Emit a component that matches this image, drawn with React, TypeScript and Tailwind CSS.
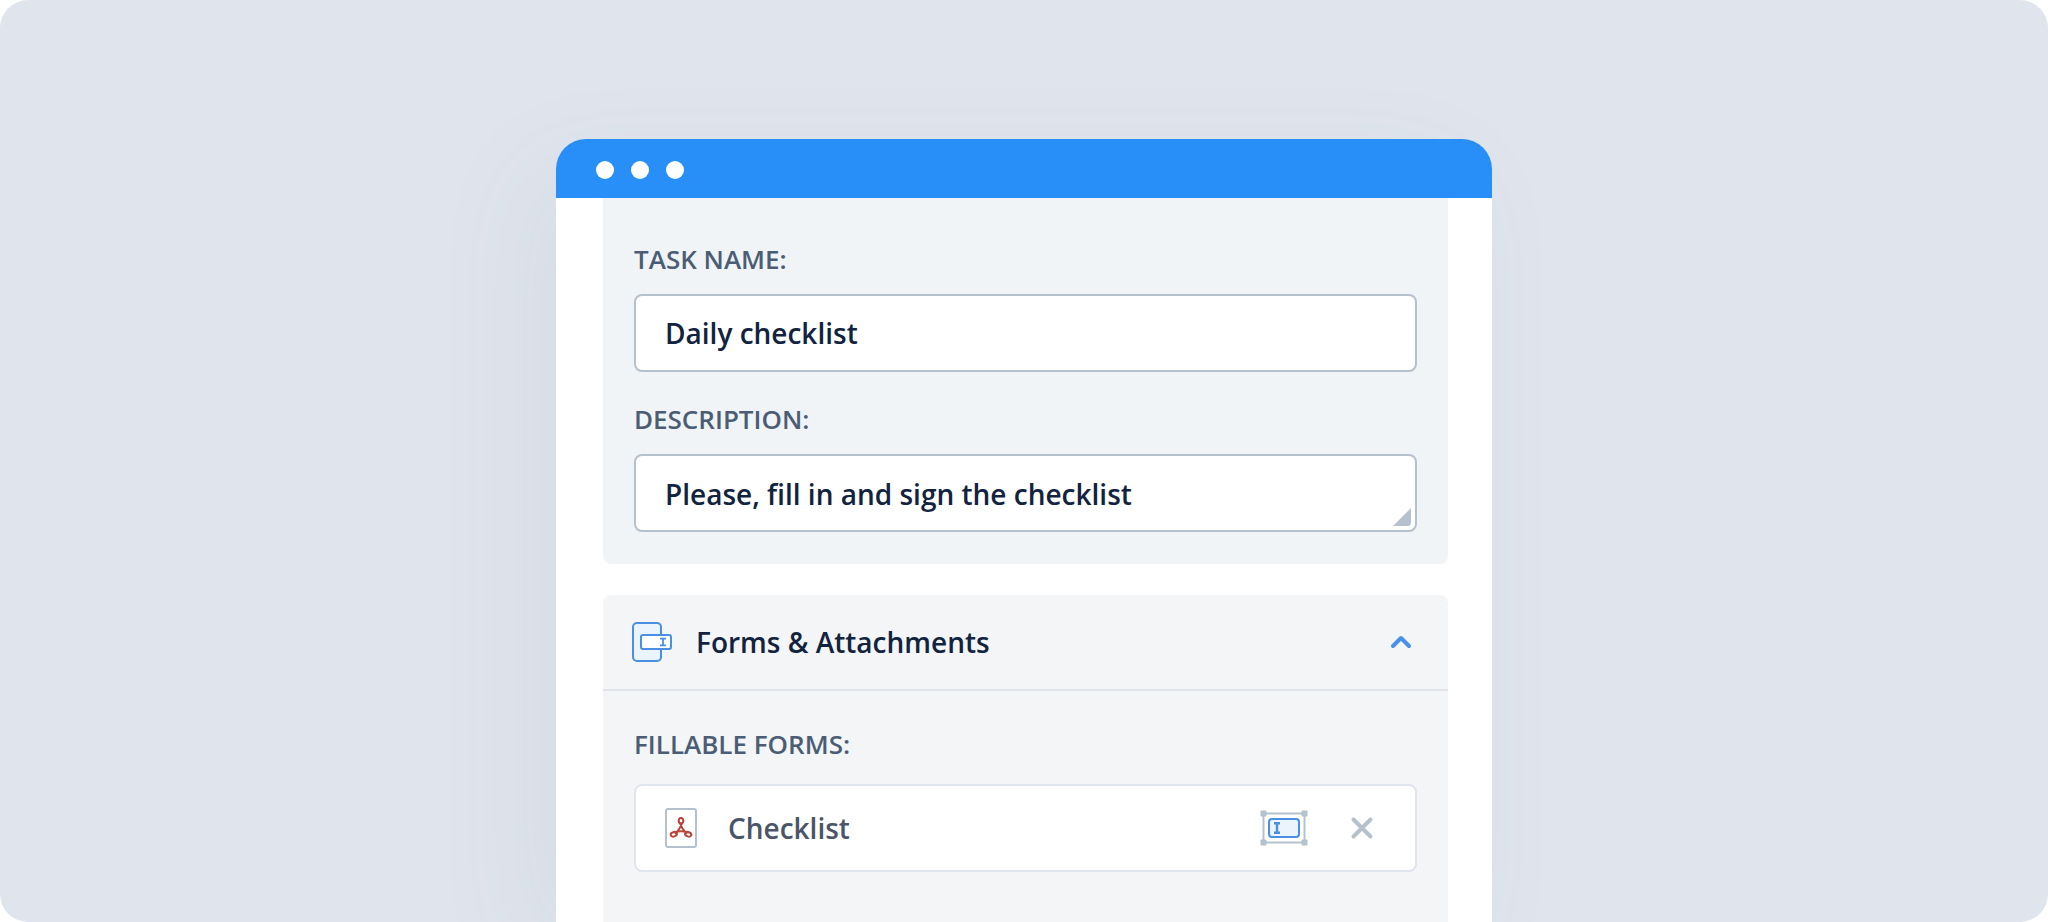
import React, { useState } from 'react';

const LABEL = 'block text-[26px] leading-8 font-semibold uppercase text-[#4a5d75]';
const FIELD =
  'block w-full h-[78px] rounded-lg border-2 border-[#b6c1ce] bg-white px-[29px] text-[28px] font-semibold text-[#12233f] outline-none focus:border-[#4a90e8]';

function FormsIcon() {
  return (
    <svg className="w-10 h-10 shrink-0" viewBox="0 0 40 40" fill="none" aria-hidden="true">
      <rect x="1" y="1" width="28" height="38" rx="4" fill="#ebf4fd" stroke="#4a90e2" strokeWidth="2" />
      <rect x="9" y="13" width="30" height="14" rx="2" fill="#fff" stroke="#4a90e2" strokeWidth="2" />
      <path d="M28 16.7h6M28 23.3h6M31 16.7v6.6" stroke="#4a90e2" strokeWidth="1.8" />
    </svg>
  );
}

function PdfIcon() {
  return (
    <svg className="w-8 h-10 shrink-0" viewBox="0 0 32 40" fill="none" aria-hidden="true">
      <rect x="1" y="1" width="30" height="38" rx="2" fill="#fff" stroke="#b6c1ce" strokeWidth="2" />
      <g stroke="#b8453a" strokeWidth="2" strokeLinecap="round" strokeLinejoin="round">
        <ellipse cx="16" cy="12.800" rx="2.300" ry="2.800" />
        <ellipse cx="8.800" cy="26.300" rx="3.200" ry="2.200" transform="rotate(-18 8.8 26.3)" />
        <ellipse cx="23.200" cy="26.300" rx="3.200" ry="2.200" transform="rotate(18 23.2 26.3)" />
        <path d="M15 15.300c1.200 3.700 3 6.700 6.200 9.800M17 15.300c-1.200 3.700-3 6.700-6.200 9.800M9.500 24.200c4.300-1.200 8.700-1.200 13 0" />
      </g>
    </svg>
  );
}

function FieldIcon() {
  return (
    <svg className="w-12 h-9" viewBox="0 0 48 36" fill="none" aria-hidden="true">
      <rect x="3.500" y="3.500" width="41" height="29" stroke="#b6c1ce" strokeWidth="2" />
      <g fill="#b6c1ce">
        <rect x="0.500" y="0.500" width="6" height="6" rx="1" />
        <rect x="41.500" y="0.500" width="6" height="6" rx="1" />
        <rect x="0.500" y="29.500" width="6" height="6" rx="1" />
        <rect x="41.500" y="29.500" width="6" height="6" rx="1" />
      </g>
      <rect x="9" y="9" width="30" height="18" rx="3" fill="#ebf4fd" stroke="#4a90e2" strokeWidth="2" />
      <path d="M14 13.200h6M14 22.800h6M17 13.200v9.600" stroke="#4a90e2" strokeWidth="2.400" />
    </svg>
  );
}

export default function App() {
  const [open, setOpen] = useState(true);

  return (
    <main className="flex h-screen justify-center overflow-hidden rounded-[28px] bg-[#e0e5ed] pt-[139px] font-['Open_Sans',sans-serif]">
      <div className="flex w-full max-w-[936px] flex-col overflow-hidden rounded-t-[30px] bg-white shadow-[-28px_28px_110px_rgba(70,80,95,0.06)]">
        <header className="flex h-[59px] shrink-0 items-center gap-[17px] bg-[#288ff8] px-10 pt-[3px]">
          <span className="size-[18px] rounded-full bg-white" />
          <span className="size-[18px] rounded-full bg-white" />
          <span className="size-[18px] rounded-full bg-white" />
        </header>

        <form className="flex grow flex-col gap-[31px] pl-[47px] pr-11">
          <section className="rounded-b-lg bg-[#f0f4f7] px-[31px] pb-8 pt-[45px]">
            <label htmlFor="task-name" className={LABEL}>Task name:</label>
            <input id="task-name" type="text" defaultValue="Daily checklist" className={`${FIELD} mt-[19px]`} />

            <label htmlFor="description" className={`${LABEL} mt-[31px]`}>Description:</label>
            <div className="relative mt-[19px]">
              <textarea
                id="description"
                rows={1}
                defaultValue="Please, fill in and sign the checklist"
                className={`${FIELD} resize-none overflow-hidden py-[18px] leading-10`}
              />
              <svg className="pointer-events-none absolute bottom-1.5 right-1.5 size-[18px]" viewBox="0 0 18 18" aria-hidden="true">
                <path d="M18 0v14.500a3.500 3.500 0 0 1-3.500 3.500H0z" fill="#b6c1ce" />
              </svg>
            </div>
          </section>

          <section className="grow rounded-t-lg bg-[#f3f5f7]">
            <button
              type="button"
              aria-expanded={open}
              onClick={() => setOpen(!open)}
              className="flex h-24 w-full items-center border-b-2 border-[#e1e5eb] pl-[29px] pr-9 text-left"
            >
              <FormsIcon />
              <span className="ml-6 grow text-[28px] leading-10 font-semibold text-[#12233f]">Forms &amp; Attachments</span>
              <svg className="h-3.5 w-[22px]" viewBox="0 0 22 14" fill="none" aria-hidden="true">
                <path d="M3 11l8-8 8 8" stroke="#4a90e8" strokeWidth="4" strokeLinecap="round" strokeLinejoin="round" />
              </svg>
            </button>

            {open && (
              <div className="px-[31px] pt-[37px]">
                <h3 className={LABEL}>Fillable forms:</h3>
                <div className="mt-6 flex h-[88px] items-center rounded-lg border-2 border-[#e1e5ed] bg-white pl-[29px] pr-[41px]">
                  <PdfIcon />
                  <span className="ml-[31px] grow text-[28px] leading-10 font-semibold text-[#4a5568]">Checklist</span>
                  <button type="button" aria-label="Edit fields">
                    <FieldIcon />
                  </button>
                  <button type="button" aria-label="Remove" className="ml-[42px]">
                    <svg className="size-6" viewBox="0 0 24 24" fill="none" aria-hidden="true">
                      <path d="M3.500 3.500l17 17M20.500 3.500l-17 17" stroke="#b6c1ce" strokeWidth="4" strokeLinecap="round" />
                    </svg>
                  </button>
                </div>
              </div>
            )}
          </section>
        </form>
      </div>
    </main>
  );
}
